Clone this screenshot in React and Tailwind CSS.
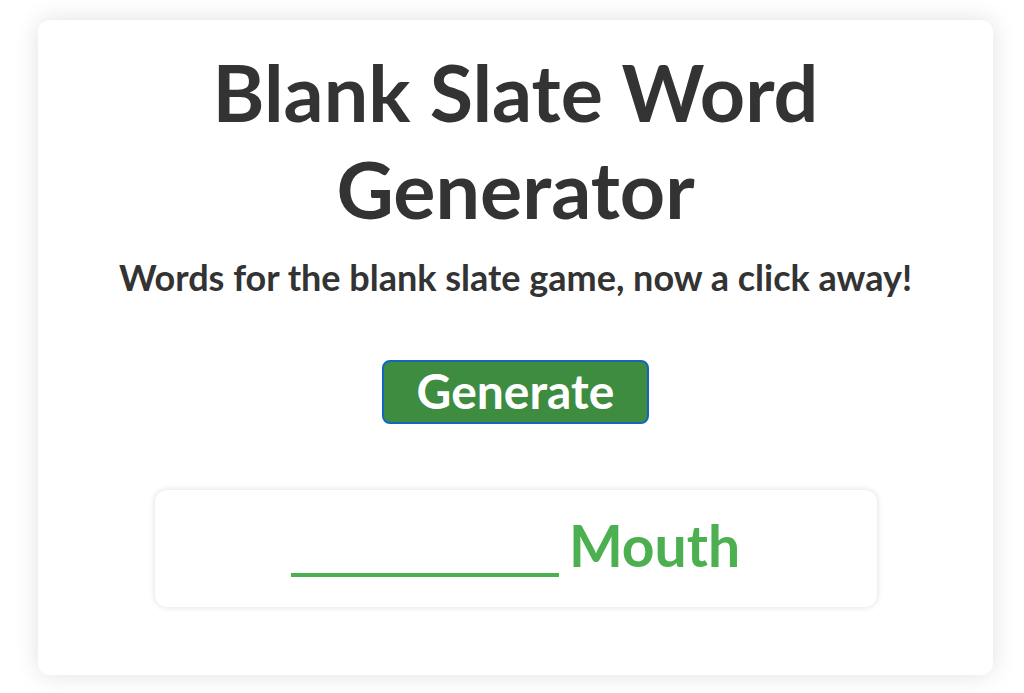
export default function App() {
  return (
    <div className="w-[1024px] h-[693px] bg-white pt-[20px] px-[38px]" style={{ fontFamily: 'Lato, "Open Sans", sans-serif' }}>
      <div className="w-[955px] h-[655px] bg-white rounded-[12px] shadow-[0_0_24px_rgba(0,0,0,0.12)] flex flex-col items-center pt-[23px]">
        <h1 className="text-[79px] leading-[97px] font-bold text-[#333333] text-center w-[700px]">
          Blank Slate Word Generator
        </h1>
        <p className="mt-[20px] text-[36px] leading-[40px] font-bold text-[#333333]">
          Words for the blank slate game, now a click away!
        </p>
        <button className="mt-[63px] w-[267px] h-[64px] bg-[#3d8c40] border-2 border-[#1565c0] rounded-[8px] text-white text-[48px] font-bold leading-none flex items-center justify-center pb-[3px]">
          Generate
        </button>
        <div className="mt-[66px] w-[722px] h-[117px] rounded-[12px] shadow-[0_0_6px_rgba(0,0,0,0.14)] flex items-end justify-center pb-[34px] gap-[10px]">
          <span className="w-[268px] h-[4px] bg-[#4caf50] -mb-[4px]" />
          <span className="text-[57px] leading-[55px] font-bold text-[#4caf50]">Mouth</span>
        </div>
      </div>
    </div>
  );
}
